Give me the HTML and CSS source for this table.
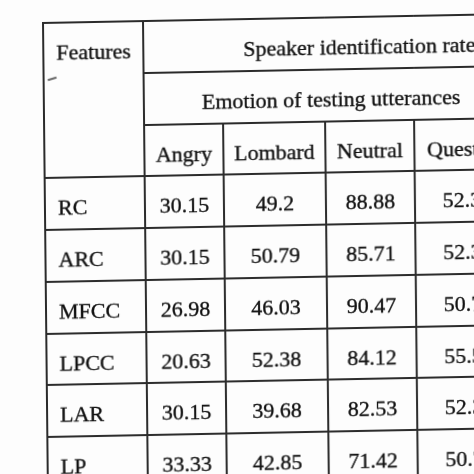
FILE: index.html
```html
<!DOCTYPE html>
<html lang="en">
<head>
<meta charset="utf-8">
<title>Speaker identification rate</title>
<link rel="stylesheet" href="styles.css">
</head>
<body>
<table class="results">
  <colgroup>
    <col class="c-feat">
    <col class="c-angry">
    <col class="c-lombard">
    <col class="c-neutral">
    <col class="c-question">
  </colgroup>
  <thead>
    <tr>
      <th rowspan="3" class="feat-head">Features<span class="speck"></span></th>
      <th colspan="4" class="group speaker">Speaker identification rate</th>
    </tr>
    <tr>
      <th colspan="4" class="group emotion">Emotion of testing utterances</th>
    </tr>
    <tr>
      <th>Angry</th>
      <th>Lombard</th>
      <th>Neutral</th>
      <th>Question</th>
    </tr>
  </thead>
  <tbody>
    <tr><td class="name">RC</td><td>30.15</td><td>49.2</td><td>88.88</td><td>52.38</td></tr>
    <tr><td class="name">ARC</td><td>30.15</td><td>50.79</td><td>85.71</td><td>52.38</td></tr>
    <tr><td class="name">MFCC</td><td>26.98</td><td>46.03</td><td>90.47</td><td>50.79</td></tr>
    <tr><td class="name">LPCC</td><td>20.63</td><td>52.38</td><td>84.12</td><td>55.55</td></tr>
    <tr><td class="name">LAR</td><td>30.15</td><td>39.68</td><td>82.53</td><td>52.38</td></tr>
    <tr><td class="name">LP</td><td>33.33</td><td>42.85</td><td>71.42</td><td>50.79</td></tr>
  </tbody>
</table>
</body>
</html>
```

FILE: styles.css
```css
html, body {
  margin: 0;
  padding: 0;
  width: 474px;
  height: 474px;
  overflow: hidden;
  background: #fdfdfd;
}

.results {
  margin: 22px 0 0 42px;
  border-collapse: collapse;
  table-layout: fixed;
  width: 475px;
  font-family: "Liberation Serif", "Times New Roman", serif;
  font-size: 22px;
  line-height: 24px;
  color: #121212;
  -webkit-text-stroke: 0.35px #121212;
  transform: skew(0.6deg, -1.1deg);
  transform-origin: 0 0;
  filter: blur(0.3px);
}

.c-feat { width: 100px; }
.c-angry { width: 79px; }
.c-lombard { width: 102px; }
.c-neutral { width: 89px; }
.c-question { width: 105px; }

.results tr {
  height: 51.75px;
}

.results th,
.results td {
  border: 2px solid #2b2b2b;
  padding: 17px 0 0;
  vertical-align: top;
  text-align: center;
  font-weight: normal;
  white-space: nowrap;
  overflow: hidden;
}

.results .feat-head,
.results .name {
  text-align: left;
  padding-left: 12px;
}

.feat-head {
  position: relative;
}

.speck {
  position: absolute;
  left: 3px;
  top: 54px;
  width: 9px;
  height: 1.5px;
  background: #6a6a6a;
  transform: rotate(-16deg);
}

.results .group {
  text-align: left;
}

.results .speaker {
  padding-left: 99px;
}

.results .emotion {
  padding-left: 57px;
}
```
